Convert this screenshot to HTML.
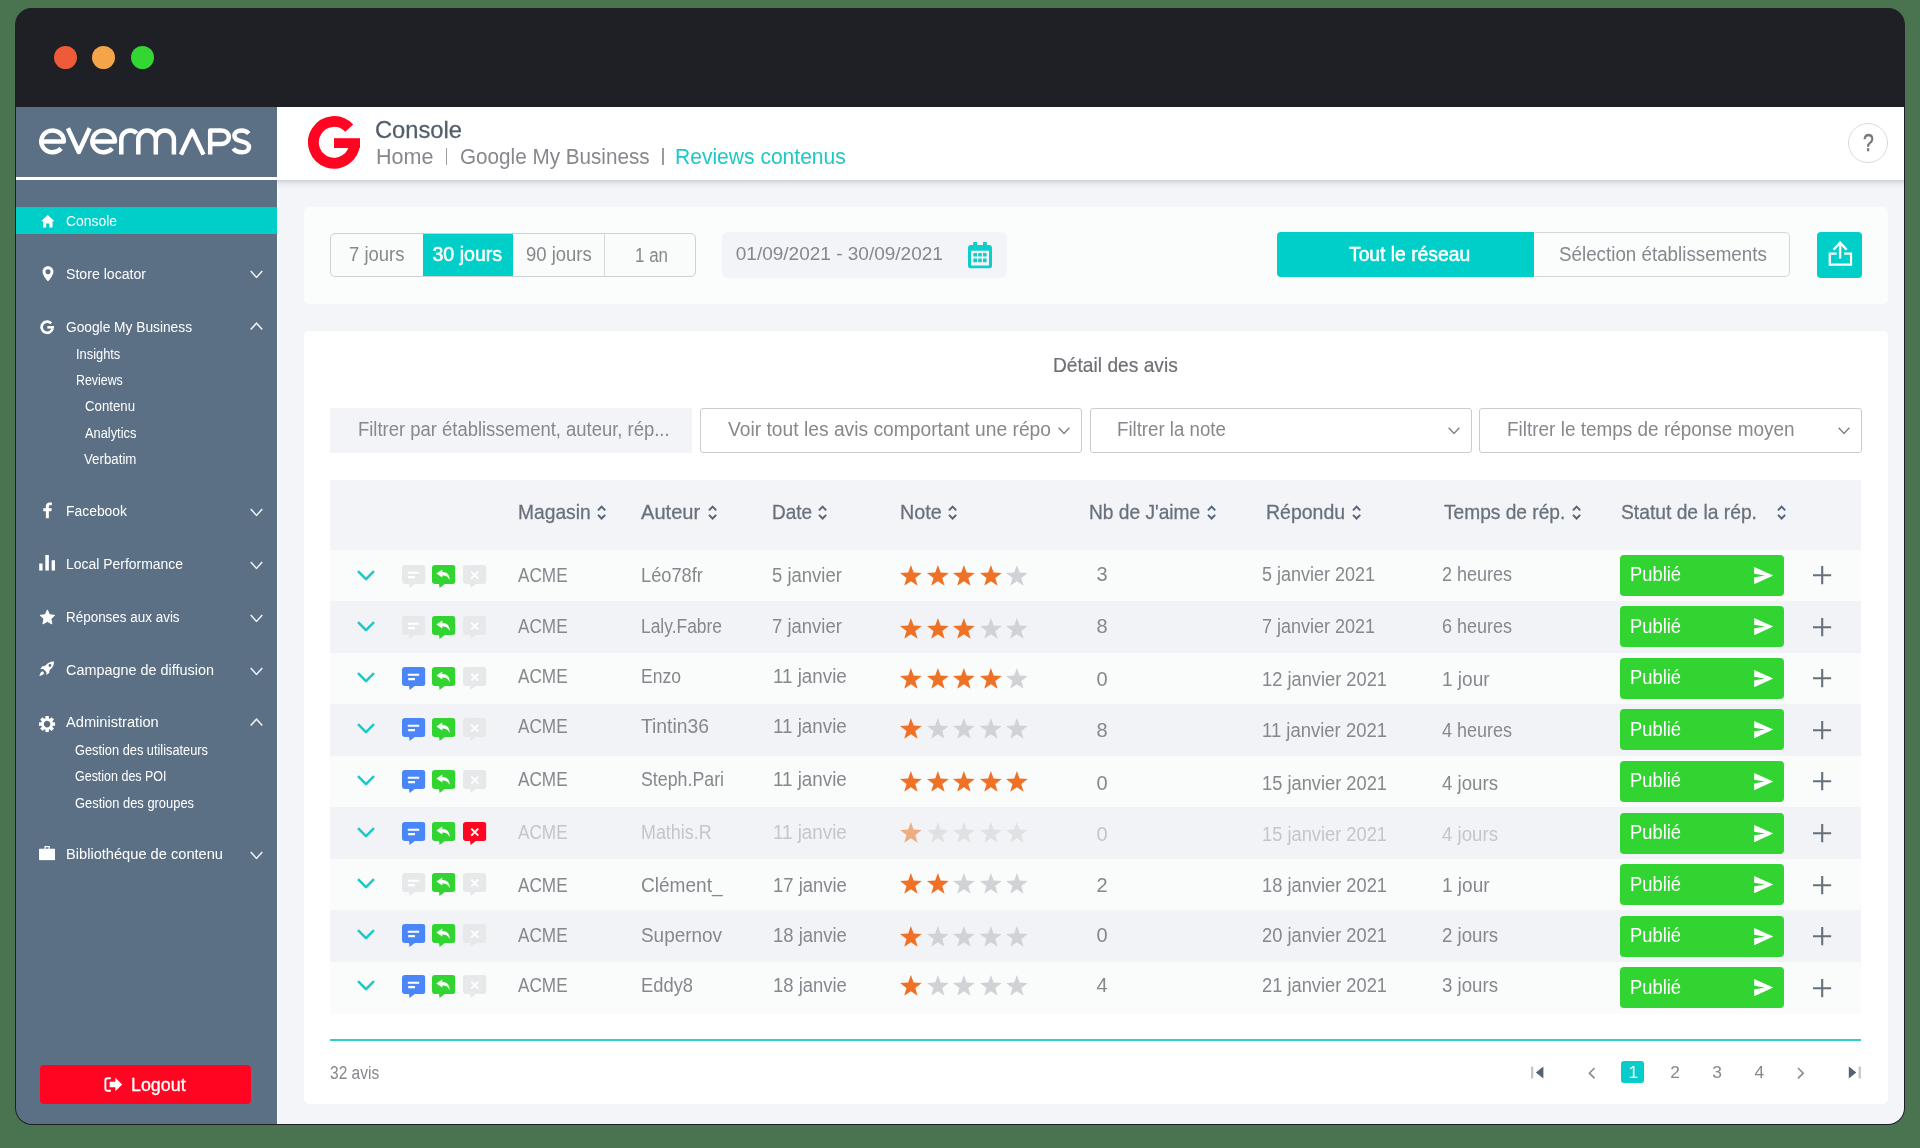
<!DOCTYPE html>
<html lang="fr">
<head>
<meta charset="utf-8">
<title>Evermaps - Console - Reviews contenus</title>
<style>
html,body{margin:0;padding:0}
body{width:1920px;height:1148px;overflow:hidden;background:#4a7350;font-family:"Liberation Sans",sans-serif;position:relative}
#window{position:absolute;left:15px;top:8px;width:1890px;height:1117px;border-radius:17px;overflow:hidden;background:#1f2025}
#clip{position:absolute;left:1px;top:0;width:1888px;height:1116px;border-radius:16px;overflow:hidden}
#page{position:absolute;left:-16px;top:-8px;width:1920px;height:1148px;will-change:transform}
#titlebar{position:absolute;left:15px;top:8px;width:1889px;height:99px;background:#1f2025}
.tl{position:absolute;top:37.8px;width:23px;height:23px;border-radius:50%}
#content{position:absolute;left:277px;top:107px;width:1627px;height:1017px;background:#f3f5f8;box-shadow:inset 1.5px 0 0 rgba(255,255,255,.75)}
#sidebar{position:absolute;left:16px;top:107px;width:261px;height:1017px;background:#5c7085}
#logo{position:absolute;overflow:visible}
#logoline{position:absolute;left:0;top:69.9px;width:261px;height:3.1px;background:#fff}
#nav-active{position:absolute;left:0;top:100.3px;width:261px;height:26.5px;background:#00cfc9}
#logout{position:absolute;left:23.5px;top:957.7px;width:211.5px;height:39.4px;background:#ff0521;border-radius:4px}
.t{position:absolute;white-space:nowrap;line-height:1;transform-origin:0 50%;display:block}
.i{position:absolute;overflow:visible;fill:currentColor;stroke:none}
#header{position:absolute;left:277px;top:107px;width:1627px;height:73px;background:#fff}
.sep{position:absolute;top:41.2px;width:1.3px;height:16.4px;background:#989da3}
#help{position:absolute;left:1570.8px;top:15.5px;width:38.4px;height:38.4px;border:1px solid #d6dddf;border-radius:50%}
#hshadow{position:absolute;left:277px;top:179.5px;width:1627px;height:9px;background:linear-gradient(to bottom,rgba(120,135,140,.32),rgba(160,170,175,.12) 45%,rgba(243,245,248,0))}
#toolbar{position:absolute;left:304px;top:207px;width:1584px;height:96.5px;background:#fbfcfc;border-radius:5px}
.bgroup{position:absolute;box-sizing:border-box;border:1px solid #ccd2d5;border-radius:5px;background:#fafbfb;overflow:hidden}
.bsep{position:absolute;top:0;width:1.2px;height:100%;background:#d6dadc}
.bactive{position:absolute;top:-1px;height:46px;background:#00cfc9}
#datefield{position:absolute;background:#f2f4f8;border-radius:6px}
.bactive2{position:absolute;background:#00cfc9;border-radius:4px 0 0 4px}
.bsel{position:absolute;box-sizing:border-box;border:1px solid #d3d7da;border-left:none;border-radius:0 5px 5px 0;background:#fbfcfc}
.bexport{position:absolute;background:#00cfc9;border-radius:4px}
#card{position:absolute;left:304px;top:331px;width:1584px;height:773px;background:#fff;border-radius:5px}
#search{position:absolute;background:#f2f4f8}
.select{position:absolute;box-sizing:border-box;border:1px solid #c9cdd0;border-radius:3px;background:#fff}
#thead{position:absolute;background:#f2f4f8}
.th{-webkit-text-stroke:.28px currentColor}
.sb{-webkit-text-stroke:.55px currentColor}
.row{position:absolute;left:26px;width:1531px;height:51.6px;color:#85888d}
.row.odd{background:#fafbfb}
.row.even{background:#f2f3f6}
.row.faded .c{color:#c3c6ca}
.clip{position:absolute;top:0;height:51.6px;overflow:hidden}
.pub{position:absolute;background:#32d432;border-radius:4px}
#tline{position:absolute;height:1.8px;background:#2fcdcb}
#pgcur{position:absolute;background:#06cdc9;border-radius:3px}

</style>
</head>
<body>
<svg width="0" height="0" style="position:absolute">
<defs>
<symbol id="evermaps" viewBox="36 124 220 36">
<g fill="none" stroke="#fff" stroke-width="4.5" stroke-linejoin="round">
<path d="M61.1 148.6A11.3 10.9 0 1 1 63.9 141.4L41.4 141.4"/>
<path d="M67.9 128.2L78.8 152L89.7 128.2"/>
<path d="M112.2 148.6A11.3 10.9 0 1 1 115 141.4L92.5 141.4"/>
<path d="M121.3 154.6L121.3 139.6A9 9 0 0 1 130.3 130.5Q134.4 130.5 136.6 133.4"/>
<path d="M138.3 154.6L138.3 139.3A8.75 8.75 0 0 1 155.8 139.3L155.8 154.6M155.8 139.5A9.05 9 0 0 1 173.9 139.5L173.9 154.6"/>
<path d="M180.9 154.6L192.2 130.8L203.5 154.6"/>
<path d="M210.2 154.6L210.2 130.5L221.6 130.5A7.3 6.7 0 0 1 221.6 143.9L210.2 143.9"/>
<path d="M248.7 133.6C247 131.4 244.6 130.5 241.6 130.5C237 130.5 234.4 132.7 234.4 135.8C234.4 139.2 237.4 140.5 241.5 141.4C246.1 142.4 249 143.7 249 147.2C249 150.5 246.1 152.3 241.9 152.3C238 152.3 235 151 233.4 148.6"/>
</g>
</symbol>
<symbol id="bigG" viewBox="0 0 54 54">
<path d="M42.2 13.2A20.6 20.9 0 1 0 47.6 28.4" fill="none" stroke="currentColor" stroke-width="10.8"/>
<rect x="27" y="23.2" width="26" height="9.8" fill="currentColor"/>
</symbol>
<symbol id="gsm" viewBox="0 0 54 54">
<path d="M41.9 12.1A20.9 20.9 0 1 0 47.3 31.6" fill="none" stroke="#fff" stroke-width="10"/>
<rect x="27.5" y="22.4" width="25.3" height="9.4" fill="#fff"/>
</symbol>
<symbol id="home" viewBox="0 0 16 16"><path fill="#fff" d="M8 .6L15.8 8H13.6V15.4H9.9V10.6H6.1V15.4H2.4V8H.2Z"/></symbol>
<symbol id="pin" viewBox="0 0 12 16"><path fill="#fff" fill-rule="evenodd" d="M6 .3C2.8.3.4 2.8.4 5.8C.4 9.6 6 15.8 6 15.8S11.6 9.6 11.6 5.8C11.6 2.8 9.2.3 6 .3ZM6 3.3A2.6 2.6 0 1 1 6 8.5A2.6 2.6 0 1 1 6 3.3Z"/></symbol>
<symbol id="fb" viewBox="0 0 10 16"><path fill="#fff" d="M6.6 16V8.9H9L9.4 6.1H6.6V4.4C6.6 3.6 6.9 3.1 8 3.1H9.5V.6C9.2.55 8.3.5 7.3.5C5.2.5 3.7 1.8 3.7 4.1V6.1H1.2V8.9H3.7V16Z"/></symbol>
<symbol id="bars" viewBox="0 0 16 16"><path fill="#fff" d="M0 8.6H3.4V16H0ZM6.2 0H9.8V16H6.2ZM12.6 5.2H16V16H12.6Z"/></symbol>
<symbol id="star" viewBox="0 0 16 16"><path fill="#fff" stroke="#fff" stroke-width=".9" stroke-linejoin="round" d="M8 .9L10.2 5.7L15.3 6.3L11.5 9.9L12.5 15L8 12.4L3.5 15L4.5 9.9L.7 6.3L5.8 5.7Z"/></symbol>
<symbol id="rocket" viewBox="0 0 16 16"><path fill="#fff" fill-rule="evenodd" d="M15.6.4C11.6.3 8.6 2 6.6 5L3.4 5.4L1.4 8.4L4.4 8.2L7.8 11.6L7.6 14.6L10.6 12.6L11 9.4C14 7.4 15.7 4.4 15.6.4ZM11.4 3.2A1.5 1.5 0 1 1 11.4 6.2A1.5 1.5 0 1 1 11.4 3.2ZM3.6 10.6C2.2 11.2 1 12.6.4 15.6C3.4 15 4.8 13.8 5.4 12.4Z"/></symbol>
<symbol id="gear" viewBox="-8 -8 16 16"><circle r="4.6" fill="none" stroke="#fff" stroke-width="2.7"/><g fill="#fff"><rect x="-1.7" y="-8" width="3.4" height="3.2"/><rect x="-1.7" y="4.8" width="3.4" height="3.2"/><rect x="-8" y="-1.7" width="3.2" height="3.4"/><rect x="4.8" y="-1.7" width="3.2" height="3.4"/><g transform="rotate(45)"><rect x="-1.7" y="-8" width="3.4" height="3.2"/><rect x="-1.7" y="4.8" width="3.4" height="3.2"/><rect x="-8" y="-1.7" width="3.2" height="3.4"/><rect x="4.8" y="-1.7" width="3.2" height="3.4"/></g></g></symbol>
<symbol id="case" viewBox="0 0 16 14"><path fill="#fff" d="M5.4 0H10.6V2.6H15C15.6 2.6 16 3 16 3.6V13C16 13.6 15.6 14 15 14H1C.4 14 0 13.6 0 13V3.6C0 3 .4 2.6 1 2.6H5.4ZM6.6 1.1V2.6H9.4V1.1Z"/></symbol>
<symbol id="ic-logout" viewBox="0 0 19 15"><path fill="none" stroke="#fff" stroke-width="2" d="M7 1.2H3.6Q1.4 1.2 1.4 3.4V11.6Q1.4 13.8 3.6 13.8H7"/><path fill="#fff" d="M11.6 .6L18.6 7.5L11.6 14.4V10.4H5.8V4.6H11.6Z"/></symbol>
<symbol id="chev-dn" viewBox="0 0 18 10.4" preserveAspectRatio="none"><path d="M1 1.2L9 9L17 1.2" fill="none" stroke="currentColor" vector-effect="non-scaling-stroke"/></symbol>
<symbol id="chev-up" viewBox="0 0 18 10.4" preserveAspectRatio="none"><path d="M1 9.2L9 1.4L17 9.2" fill="none" stroke="currentColor" vector-effect="non-scaling-stroke"/></symbol>
<symbol id="sort" viewBox="0 0 9.4 15.4"><path d="M1 5.4L4.7 1.6L8.4 5.4M1 10L4.7 13.8L8.4 10" fill="none" stroke="currentColor" stroke-width="2"/></symbol>
<symbol id="b-msg" viewBox="0 0 23.4 23"><path d="M3 0H20.4Q23.4 0 23.4 3V16Q23.4 19 20.4 19H12.8L7.6 22.9L7 19H3Q0 19 0 16V3Q0 0 3 0Z"/><path d="M5.8 7.8H17.2M6.2 12.1H13" stroke="#fff" stroke-width="2.1" fill="none"/></symbol>
<symbol id="b-reply" viewBox="0 0 23.4 23"><path d="M3 0H20.4Q23.4 0 23.4 3V16Q23.4 19 20.4 19H12.8L7.6 22.9L7 19H3Q0 19 0 16V3Q0 0 3 0Z"/><path fill="#fff" d="M10.3 4.6V6.9C15.2 6.9 17.9 9.8 17.7 15.2C16.5 12 14.3 10.4 10.3 10.5V12.4L4.4 8.5Z"/></symbol>
<symbol id="b-x" viewBox="0 0 23.4 23"><path d="M3 0H20.4Q23.4 0 23.4 3V16Q23.4 19 20.4 19H12.8L7.6 22.9L7 19H3Q0 19 0 16V3Q0 0 3 0Z"/><path d="M8.3 6.7L15.3 13.7M15.3 6.7L8.3 13.7" stroke="#fff" stroke-width="1.9" fill="none"/></symbol>
<symbol id="star5" viewBox="0 0 21.8 20.8"><path d="M10.9 0L13.6 7.6L21.8 7.9L15.3 12.9L17.6 20.8L10.9 16.2L4.2 20.8L6.5 12.9L0 7.9L8.2 7.6Z"/></symbol>
<symbol id="send" viewBox="0 0 19.6 17.6"><path d="M0 0L19.6 8.8L0 17.6L0 10.8L11 8.8L0 6.8Z"/></symbol>
<symbol id="plus" viewBox="0 0 18.4 18.4"><path d="M9.2 0V18.4M0 9.2H18.4" stroke="currentColor" stroke-width="2.1" fill="none"/></symbol>
<symbol id="calendar" viewBox="0 0 24 26.5"><path fill-rule="evenodd" d="M5.2 0H9V3H15V0H18.8V3H21Q24 3 24 6V23.5Q24 26.5 21 26.5H3Q0 26.5 0 23.5V6Q0 3 3 3H5.2ZM3 8.8V23.4H21V8.8Z"/><path d="M5.4 11H9V14.6H5.4ZM10.2 11H13.8V14.6H10.2ZM15 11H18.6V14.6H15ZM5.4 16.6H9V20.2H5.4ZM10.2 16.6H13.8V20.2H10.2ZM15 16.6H18.6V20.2H15Z"/></symbol>
<symbol id="export" viewBox="0 0 24.6 25"><path d="M5.5 8.8L12.1 1.7L18.7 8.8M12.1 2.4V17.6" fill="none" stroke="currentColor" stroke-width="2.4"/><path d="M8.7 12.7H1.8V23.7H23.1V12.7H16.1" fill="none" stroke="currentColor" stroke-width="2.3"/></symbol>
<symbol id="pg-first" viewBox="0 0 13.4 13"><path fill="#c3c7cb" d="M0 .6H2.3V12.4H0Z"/><path d="M12.4 .4V12.6L4.9 6.5Z"/></symbol>
<symbol id="pg-last" viewBox="0 0 13.4 13"><path fill="#c3c7cb" d="M10.6 .6H12.9V12.4H10.6Z"/><path d="M.8 .4V12.6L8.3 6.5Z"/></symbol>
<symbol id="pg-prev" viewBox="0 0 7.6 12.4"><path d="M6.6 1L1.4 6.2L6.6 11.4" fill="none" stroke="currentColor" stroke-width="1.7"/></symbol>
<symbol id="pg-next" viewBox="0 0 7.6 12.4"><path d="M1 1L6.2 6.2L1 11.4" fill="none" stroke="currentColor" stroke-width="1.7"/></symbol>
</defs>
</svg>

<div id="window"><div id="clip"><div id="page">
<div id="titlebar"><i class="tl" style="left:39.1px;background:#ef5a39"></i><i class="tl" style="left:76.6px;background:#f4a54a"></i><i class="tl" style="left:116.4px;background:#33d633"></i></div>
<div id="content"></div>
<div id="sidebar">
<svg id="logo" style="left:20px;top:17px;width:220px;height:36px"><use href="#evermaps"/></svg>
<div id="logoline"></div>
<div id="nav-active"></div>
<svg class="i" style="left:24.6px;top:106.9px;width:13.6px;height:14.4px;"><use href="#home"/></svg>
<span class="t" style="left:50.0px;top:106.2px;font-size:15px;transform:scaleX(0.9267);color:#fff;">Console</span>
<svg class="i" style="left:25.6px;top:159.0px;width:12.0px;height:15.6px;"><use href="#pin"/></svg>
<span class="t" style="left:50.2px;top:159.1px;font-size:15.5px;transform:scaleX(0.9103);color:#fff;">Store locator</span>
<svg class="i" style="left:234.2px;top:163.4px;width:13.0px;height:8.6px;color:#eef1f4;stroke-width:1.55;"><use href="#chev-dn"/></svg>
<svg class="i" style="left:24.2px;top:212.5px;width:14.4px;height:14.6px;"><use href="#gsm"/></svg>
<span class="t" style="left:50.2px;top:212.1px;font-size:15.5px;transform:scaleX(0.8864);color:#fff;">Google My Business</span>
<svg class="i" style="left:234.2px;top:214.8px;width:13.0px;height:8.6px;color:#eef1f4;stroke-width:1.55;"><use href="#chev-up"/></svg>
<svg class="i" style="left:25.9px;top:395.0px;width:10.4px;height:16.6px;"><use href="#fb"/></svg>
<span class="t" style="left:50.2px;top:395.8px;font-size:15.5px;transform:scaleX(0.8961);color:#fff;">Facebook</span>
<svg class="i" style="left:234.2px;top:400.8px;width:13.0px;height:8.6px;color:#eef1f4;stroke-width:1.55;"><use href="#chev-dn"/></svg>
<svg class="i" style="left:23.3px;top:447.8px;width:16.2px;height:15.8px;"><use href="#bars"/></svg>
<span class="t" style="left:50.2px;top:448.8px;font-size:15.5px;transform:scaleX(0.8993);color:#fff;">Local Performance</span>
<svg class="i" style="left:234.2px;top:453.8px;width:13.0px;height:8.6px;color:#eef1f4;stroke-width:1.55;"><use href="#chev-dn"/></svg>
<svg class="i" style="left:23.0px;top:502.0px;width:16.8px;height:16.0px;"><use href="#star"/></svg>
<span class="t" style="left:50.2px;top:502.0px;font-size:15.5px;transform:scaleX(0.8674);color:#fff;">Réponses aux avis</span>
<svg class="i" style="left:234.2px;top:507.0px;width:13.0px;height:8.6px;color:#eef1f4;stroke-width:1.55;"><use href="#chev-dn"/></svg>
<svg class="i" style="left:23.3px;top:554.0px;width:15.4px;height:15.4px;"><use href="#rocket"/></svg>
<span class="t" style="left:50.2px;top:554.7px;font-size:15.5px;transform:scaleX(0.9300);color:#fff;">Campagne de diffusion</span>
<svg class="i" style="left:234.2px;top:559.7px;width:13.0px;height:8.6px;color:#eef1f4;stroke-width:1.55;"><use href="#chev-dn"/></svg>
<svg class="i" style="left:23.2px;top:608.8px;width:16.2px;height:16.2px;"><use href="#gear"/></svg>
<span class="t" style="left:50.2px;top:607.2px;font-size:15.5px;transform:scaleX(0.9439);color:#fff;">Administration</span>
<svg class="i" style="left:234.2px;top:610.6px;width:13.0px;height:8.6px;color:#eef1f4;stroke-width:1.55;"><use href="#chev-up"/></svg>
<svg class="i" style="left:23.3px;top:739.3px;width:16.2px;height:14.4px;"><use href="#case"/></svg>
<span class="t" style="left:50.2px;top:739.2px;font-size:15.5px;transform:scaleX(0.9439);color:#fff;">Bibliothéque de contenu</span>
<svg class="i" style="left:234.2px;top:744.2px;width:13.0px;height:8.6px;color:#eef1f4;stroke-width:1.55;"><use href="#chev-dn"/></svg>
<span class="t" style="left:59.6px;top:239.7px;font-size:14px;transform:scaleX(0.9182);color:#fff;">Insights</span>
<span class="t" style="left:59.6px;top:265.9px;font-size:14px;transform:scaleX(0.8846);color:#fff;">Reviews</span>
<span class="t" style="left:69.2px;top:292.4px;font-size:14px;transform:scaleX(0.9446);color:#fff;">Contenu</span>
<span class="t" style="left:69.2px;top:318.7px;font-size:14px;transform:scaleX(0.9157);color:#fff;">Analytics</span>
<span class="t" style="left:68.0px;top:345.1px;font-size:14px;transform:scaleX(0.9484);color:#fff;">Verbatim</span>
<span class="t" style="left:59.4px;top:635.5px;font-size:14px;transform:scaleX(0.9140);color:#fff;">Gestion des utilisateurs</span>
<span class="t" style="left:59.4px;top:662.1px;font-size:14px;transform:scaleX(0.8908);color:#fff;">Gestion des POI</span>
<span class="t" style="left:59.4px;top:688.5px;font-size:14px;transform:scaleX(0.9211);color:#fff;">Gestion des groupes</span>
<div id="logout"><svg class="i" style="left:64.5px;top:12.0px;width:18.6px;height:15.0px;color:#fff;"><use href="#ic-logout"/></svg><span class="t" style="left:91.6px;top:11.0px;font-size:18px;transform:scaleX(0.9917);color:#fff;-webkit-text-stroke:.3px #fff;">Logout</span></div>
</div>
<div id="header">
<svg class="i" viewBox="0 0 54 54" style="left:29.6px;top:8.4px;width:54px;height:54px;color:#ff0521"><use href="#bigG"/></svg>
<span class="t th" style="left:98.4px;top:10.5px;font-size:24px;transform:scaleX(0.9880);color:#525e6c;">Console</span>
<span class="t" style="left:98.6px;top:39.4px;font-size:22px;transform:scaleX(0.9781);color:#85888d;">Home</span>
<span class="t" style="left:182.6px;top:39.4px;font-size:22px;transform:scaleX(0.9397);color:#85888d;">Google My Business</span>
<span class="t" style="left:398.0px;top:39.4px;font-size:22px;transform:scaleX(0.9567);color:#1ec8c6;">Reviews contenus</span>
<i class="sep" style="left:169.2px"></i><i class="sep" style="left:385.4px"></i>
<div id="help"><span class="t sb" style="left:13.9px;top:7.4px;font-size:24px;transform:scaleX(0.8091);color:#74777c;">?</span></div>
</div>
<div id="hshadow"></div>
<div id="toolbar">
<div class="bgroup" style="left:26px;top:25.5px;width:365.6px;height:44.6px">
<i class="bsep" style="left:273px"></i>
<div class="bactive" style="left:91.5px;width:90.6px"></div>
</div>
<span class="t" style="left:44.6px;top:37.6px;font-size:19.6px;transform:scaleX(0.9417);color:#85888d;">7 jours</span>
<span class="t sb" style="left:128.4px;top:37.6px;font-size:19.6px;color:#fff;">30 jours</span>
<span class="t" style="left:221.8px;top:37.6px;font-size:19.6px;transform:scaleX(0.9436);color:#85888d;">90 jours</span>
<span class="t" style="left:330.6px;top:38.6px;font-size:19.6px;transform:scaleX(0.8651);color:#85888d;">1 an</span>
<div id="datefield" style="left:418.3px;top:25.3px;width:284.4px;height:45.6px"></div>
<span class="t" style="left:431.8px;top:37.3px;font-size:19px;color:#85888d;">01/09/2021 - 30/09/2021</span>
<svg class="i" style="left:664.0px;top:35.0px;width:24.0px;height:26.5px;color:#0fcdc9;"><use href="#calendar"/></svg>
<div class="bactive2" style="left:972.8px;top:25.3px;width:257.7px;height:45.2px"></div>
<div class="bsel" style="left:1230.5px;top:25.3px;width:255.8px;height:45.2px"></div>
<span class="t sb" style="left:1044.6px;top:36.8px;font-size:20.4px;transform:scaleX(0.9458);color:#fff;">Tout le réseau</span>
<span class="t" style="left:1254.6px;top:36.6px;font-size:20px;transform:scaleX(0.9393);color:#85888d;">Sélection établissements</span>
<div class="bexport" style="left:1513px;top:25.1px;width:45.2px;height:45.6px"><svg class="i" style="left:10.6px;top:9.4px;width:24.6px;height:25.0px;color:#fff;"><use href="#export"/></svg></div>
</div>
<div id="card">
<span class="t" style="left:748.8px;top:23.7px;font-size:20.6px;transform:scaleX(0.9316);color:#6c7075;-webkit-text-stroke:.2px currentColor;">Détail des avis</span>
<div id="search" style="left:26.2px;top:77.4px;width:361.6px;height:44.4px"></div>
<span class="t" style="left:53.8px;top:88.2px;font-size:20px;transform:scaleX(0.9221);color:#85888d;">Filtrer par établissement, auteur, rép...</span>
<div class="select" style="left:396.3px;top:77.4px;width:382.2px;height:44.4px"></div>
<span class="t" style="left:423.5px;top:88.2px;font-size:20px;transform:scaleX(0.9620);color:#85888d;">Voir tout les avis comportant une répo</span>
<svg class="i" style="left:754.4px;top:96.4px;width:12.0px;height:7.4px;color:#7b8189;stroke-width:1.45;"><use href="#chev-dn"/></svg>
<div class="select" style="left:785.6px;top:77.4px;width:382.4px;height:44.4px"></div>
<span class="t" style="left:813.2px;top:88.2px;font-size:20px;transform:scaleX(0.9322);color:#85888d;">Filtrer la note</span>
<svg class="i" style="left:1143.8px;top:96.4px;width:12.0px;height:7.4px;color:#7b8189;stroke-width:1.45;"><use href="#chev-dn"/></svg>
<div class="select" style="left:1175.2px;top:77.4px;width:382.4px;height:44.4px"></div>
<span class="t" style="left:1202.9px;top:88.2px;font-size:20px;transform:scaleX(0.9474);color:#85888d;">Filtrer le temps de réponse moyen</span>
<svg class="i" style="left:1533.6px;top:96.4px;width:12.0px;height:7.4px;color:#7b8189;stroke-width:1.45;"><use href="#chev-dn"/></svg>
<div id="thead" style="left:26px;top:149px;width:1531px;height:70px"></div>
<span class="t th" style="left:214.3px;top:171.4px;font-size:20.4px;transform:scaleX(0.9428);color:#68717c;">Magasin</span>
<svg class="i" style="left:292.8px;top:174.0px;width:9.2px;height:15.2px;color:#55647a;"><use href="#sort"/></svg>
<span class="t th" style="left:337.2px;top:171.4px;font-size:20.4px;transform:scaleX(0.9849);color:#68717c;">Auteur</span>
<svg class="i" style="left:403.6px;top:174.0px;width:9.2px;height:15.2px;color:#55647a;"><use href="#sort"/></svg>
<span class="t th" style="left:467.9px;top:171.4px;font-size:20.4px;transform:scaleX(0.9306);color:#68717c;">Date</span>
<svg class="i" style="left:514.4px;top:174.0px;width:9.2px;height:15.2px;color:#55647a;"><use href="#sort"/></svg>
<span class="t th" style="left:596.0px;top:171.4px;font-size:20.4px;transform:scaleX(0.9677);color:#68717c;">Note</span>
<svg class="i" style="left:644.2px;top:174.0px;width:9.2px;height:15.2px;color:#55647a;"><use href="#sort"/></svg>
<span class="t th" style="left:784.7px;top:171.4px;font-size:20.4px;transform:scaleX(0.9399);color:#68717c;">Nb de J'aime</span>
<svg class="i" style="left:902.8px;top:174.0px;width:9.2px;height:15.2px;color:#55647a;"><use href="#sort"/></svg>
<span class="t th" style="left:961.8px;top:171.4px;font-size:20.4px;transform:scaleX(0.9564);color:#68717c;">Répondu</span>
<svg class="i" style="left:1048.0px;top:174.0px;width:9.2px;height:15.2px;color:#55647a;"><use href="#sort"/></svg>
<span class="t th" style="left:1139.5px;top:171.4px;font-size:20.4px;transform:scaleX(0.9384);color:#68717c;">Temps de rép.</span>
<svg class="i" style="left:1268.4px;top:174.0px;width:9.2px;height:15.2px;color:#55647a;"><use href="#sort"/></svg>
<span class="t th" style="left:1317.0px;top:171.4px;font-size:20.4px;transform:scaleX(0.9443);color:#68717c;">Statut de la rép.</span>
<svg class="i" style="left:1473.2px;top:174.0px;width:9.2px;height:15.2px;color:#55647a;"><use href="#sort"/></svg>
<div class="row odd" style="top:218.60px">
<svg class="i" style="left:26.6px;top:20.1px;width:18.0px;height:10.6px;color:#1fc8c8;stroke-width:2.5;"><use href="#chev-dn"/></svg><svg class="i" style="left:71.6px;top:15.2px;width:23.4px;height:23.0px;color:#e6e8ea;"><use href="#b-msg"/></svg><svg class="i" style="left:102.2px;top:15.2px;width:23.4px;height:23.0px;color:#32d432;"><use href="#b-reply"/></svg><svg class="i" style="left:132.6px;top:15.2px;width:23.4px;height:23.0px;color:#e6e8ea;"><use href="#b-x"/></svg><span class="t c" style="left:188.3px;top:15.0px;font-size:20px;transform:scaleX(0.8583);">ACME</span><div class="clip" style="left:311.2px;width:83px"><span class="t c" style="left:0.0px;top:15.0px;font-size:20px;transform:scaleX(0.9125);">Léo78fr</span></div><div class="clip" style="left:441.9px;width:75.4px"><span class="t c" style="left:0.0px;top:15.0px;font-size:20px;transform:scaleX(0.9233);">5 janvier</span></div><svg class="i" style="left:570.2px;top:15.1px;width:21.8px;height:20.8px;color:#ee7125;"><use href="#star5"/></svg><svg class="i" style="left:596.7px;top:15.1px;width:21.8px;height:20.8px;color:#ee7125;"><use href="#star5"/></svg><svg class="i" style="left:623.2px;top:15.1px;width:21.8px;height:20.8px;color:#ee7125;"><use href="#star5"/></svg><svg class="i" style="left:649.7px;top:15.1px;width:21.8px;height:20.8px;color:#ee7125;"><use href="#star5"/></svg><svg class="i" style="left:676.2px;top:15.1px;width:21.8px;height:20.8px;color:#d0d3d5;"><use href="#star5"/></svg><span class="t c" style="left:766.6px;top:14.9px;font-size:20px;">3</span><span class="t c" style="left:931.7px;top:14.9px;font-size:20px;transform:scaleX(0.8993);">5 janvier 2021</span><span class="t c" style="left:1111.9px;top:14.9px;font-size:20px;transform:scaleX(0.8993);">2 heures</span><div class="pub" style="left:1290.4px;top:5.00px;width:163.8px;height:41px"><span class="t" style="left:10.0px;top:9.6px;font-size:20px;transform:scaleX(0.9173);color:#fff;">Publié</span><svg class="i" style="left:133.6px;top:12.0px;width:19.4px;height:17.2px;color:#fff;"><use href="#send"/></svg></div><svg class="i" style="left:1483.4px;top:16.6px;width:18.4px;height:18.4px;color:#66707d;"><use href="#plus"/></svg>
</div>
<div class="row even" style="top:270.15px">
<svg class="i" style="left:26.6px;top:20.1px;width:18.0px;height:10.6px;color:#1fc8c8;stroke-width:2.5;"><use href="#chev-dn"/></svg><svg class="i" style="left:71.6px;top:15.2px;width:23.4px;height:23.0px;color:#e6e8ea;"><use href="#b-msg"/></svg><svg class="i" style="left:102.2px;top:15.2px;width:23.4px;height:23.0px;color:#32d432;"><use href="#b-reply"/></svg><svg class="i" style="left:132.6px;top:15.2px;width:23.4px;height:23.0px;color:#e6e8ea;"><use href="#b-x"/></svg><span class="t c" style="left:188.3px;top:14.6px;font-size:20px;transform:scaleX(0.8583);">ACME</span><div class="clip" style="left:311.2px;width:83px"><span class="t c" style="left:0.0px;top:14.6px;font-size:20px;transform:scaleX(0.8709);">Laly.Fabre</span></div><div class="clip" style="left:441.9px;width:75.4px"><span class="t c" style="left:0.0px;top:14.6px;font-size:20px;transform:scaleX(0.9233);">7 janvier</span></div><svg class="i" style="left:570.2px;top:16.4px;width:21.8px;height:20.8px;color:#ee7125;"><use href="#star5"/></svg><svg class="i" style="left:596.7px;top:16.4px;width:21.8px;height:20.8px;color:#ee7125;"><use href="#star5"/></svg><svg class="i" style="left:623.2px;top:16.4px;width:21.8px;height:20.8px;color:#ee7125;"><use href="#star5"/></svg><svg class="i" style="left:649.7px;top:16.4px;width:21.8px;height:20.8px;color:#d0d3d5;"><use href="#star5"/></svg><svg class="i" style="left:676.2px;top:16.4px;width:21.8px;height:20.8px;color:#d0d3d5;"><use href="#star5"/></svg><span class="t c" style="left:766.6px;top:14.4px;font-size:20px;">8</span><span class="t c" style="left:931.7px;top:14.4px;font-size:20px;transform:scaleX(0.8993);">7 janvier 2021</span><span class="t c" style="left:1111.9px;top:14.4px;font-size:20px;transform:scaleX(0.8993);">6 heures</span><div class="pub" style="left:1290.4px;top:5.10px;width:163.8px;height:41px"><span class="t" style="left:10.0px;top:9.6px;font-size:20px;transform:scaleX(0.9173);color:#fff;">Publié</span><svg class="i" style="left:133.6px;top:12.0px;width:19.4px;height:17.2px;color:#fff;"><use href="#send"/></svg></div><svg class="i" style="left:1483.4px;top:16.7px;width:18.4px;height:18.4px;color:#66707d;"><use href="#plus"/></svg>
</div>
<div class="row odd" style="top:321.70px">
<svg class="i" style="left:26.6px;top:19.5px;width:18.0px;height:10.6px;color:#1fc8c8;stroke-width:2.5;"><use href="#chev-dn"/></svg><svg class="i" style="left:71.6px;top:14.6px;width:23.4px;height:23.0px;color:#4a86f8;"><use href="#b-msg"/></svg><svg class="i" style="left:102.2px;top:14.6px;width:23.4px;height:23.0px;color:#32d432;"><use href="#b-reply"/></svg><svg class="i" style="left:132.6px;top:14.6px;width:23.4px;height:23.0px;color:#e6e8ea;"><use href="#b-x"/></svg><span class="t c" style="left:188.3px;top:13.5px;font-size:20px;transform:scaleX(0.8583);">ACME</span><div class="clip" style="left:311.2px;width:83px"><span class="t c" style="left:0.0px;top:13.5px;font-size:20px;transform:scaleX(0.8774);">Enzo</span></div><div class="clip" style="left:441.9px;width:75.4px"><span class="t c" style="left:1.4px;top:13.5px;font-size:20px;transform:scaleX(0.9386);">11 janvier</span></div><svg class="i" style="left:570.2px;top:15.6px;width:21.8px;height:20.8px;color:#ee7125;"><use href="#star5"/></svg><svg class="i" style="left:596.7px;top:15.6px;width:21.8px;height:20.8px;color:#ee7125;"><use href="#star5"/></svg><svg class="i" style="left:623.2px;top:15.6px;width:21.8px;height:20.8px;color:#ee7125;"><use href="#star5"/></svg><svg class="i" style="left:649.7px;top:15.6px;width:21.8px;height:20.8px;color:#ee7125;"><use href="#star5"/></svg><svg class="i" style="left:676.2px;top:15.6px;width:21.8px;height:20.8px;color:#d0d3d5;"><use href="#star5"/></svg><span class="t c" style="left:766.6px;top:15.9px;font-size:20px;">0</span><span class="t c" style="left:931.7px;top:15.9px;font-size:20px;transform:scaleX(0.9139);">12 janvier 2021</span><span class="t c" style="left:1111.9px;top:15.9px;font-size:20px;transform:scaleX(0.9514);">1 jour</span><div class="pub" style="left:1290.4px;top:5.20px;width:163.8px;height:41px"><span class="t" style="left:10.0px;top:9.6px;font-size:20px;transform:scaleX(0.9173);color:#fff;">Publié</span><svg class="i" style="left:133.6px;top:12.0px;width:19.4px;height:17.2px;color:#fff;"><use href="#send"/></svg></div><svg class="i" style="left:1483.4px;top:16.8px;width:18.4px;height:18.4px;color:#66707d;"><use href="#plus"/></svg>
</div>
<div class="row even" style="top:373.25px">
<svg class="i" style="left:26.6px;top:18.4px;width:18.0px;height:10.6px;color:#1fc8c8;stroke-width:2.5;"><use href="#chev-dn"/></svg><svg class="i" style="left:71.6px;top:13.5px;width:23.4px;height:23.0px;color:#4a86f8;"><use href="#b-msg"/></svg><svg class="i" style="left:102.2px;top:13.5px;width:23.4px;height:23.0px;color:#32d432;"><use href="#b-reply"/></svg><svg class="i" style="left:132.6px;top:13.5px;width:23.4px;height:23.0px;color:#e6e8ea;"><use href="#b-x"/></svg><span class="t c" style="left:188.3px;top:12.0px;font-size:20px;transform:scaleX(0.8583);">ACME</span><div class="clip" style="left:311.2px;width:83px"><span class="t c" style="left:0.0px;top:12.0px;font-size:20px;transform:scaleX(0.9657);">Tintin36</span></div><div class="clip" style="left:441.9px;width:75.4px"><span class="t c" style="left:1.4px;top:12.0px;font-size:20px;transform:scaleX(0.9386);">11 janvier</span></div><svg class="i" style="left:570.2px;top:14.1px;width:21.8px;height:20.8px;color:#ee7125;"><use href="#star5"/></svg><svg class="i" style="left:596.7px;top:14.1px;width:21.8px;height:20.8px;color:#d0d3d5;"><use href="#star5"/></svg><svg class="i" style="left:623.2px;top:14.1px;width:21.8px;height:20.8px;color:#d0d3d5;"><use href="#star5"/></svg><svg class="i" style="left:649.7px;top:14.1px;width:21.8px;height:20.8px;color:#d0d3d5;"><use href="#star5"/></svg><svg class="i" style="left:676.2px;top:14.1px;width:21.8px;height:20.8px;color:#d0d3d5;"><use href="#star5"/></svg><span class="t c" style="left:766.6px;top:16.2px;font-size:20px;">8</span><span class="t c" style="left:931.7px;top:16.2px;font-size:20px;transform:scaleX(0.9240);">11 janvier 2021</span><span class="t c" style="left:1111.9px;top:16.2px;font-size:20px;transform:scaleX(0.8993);">4 heures</span><div class="pub" style="left:1290.4px;top:4.95px;width:163.8px;height:41px"><span class="t" style="left:10.0px;top:9.6px;font-size:20px;transform:scaleX(0.9173);color:#fff;">Publié</span><svg class="i" style="left:133.6px;top:12.0px;width:19.4px;height:17.2px;color:#fff;"><use href="#send"/></svg></div><svg class="i" style="left:1483.4px;top:16.6px;width:18.4px;height:18.4px;color:#66707d;"><use href="#plus"/></svg>
</div>
<div class="row odd" style="top:424.80px">
<svg class="i" style="left:26.6px;top:19.3px;width:18.0px;height:10.6px;color:#1fc8c8;stroke-width:2.5;"><use href="#chev-dn"/></svg><svg class="i" style="left:71.6px;top:14.4px;width:23.4px;height:23.0px;color:#4a86f8;"><use href="#b-msg"/></svg><svg class="i" style="left:102.2px;top:14.4px;width:23.4px;height:23.0px;color:#32d432;"><use href="#b-reply"/></svg><svg class="i" style="left:132.6px;top:14.4px;width:23.4px;height:23.0px;color:#e6e8ea;"><use href="#b-x"/></svg><span class="t c" style="left:188.3px;top:13.0px;font-size:20px;transform:scaleX(0.8583);">ACME</span><div class="clip" style="left:311.2px;width:83px"><span class="t c" style="left:0.0px;top:13.0px;font-size:20px;transform:scaleX(0.8887);">Steph.Pari</span></div><div class="clip" style="left:441.9px;width:75.4px"><span class="t c" style="left:1.4px;top:13.0px;font-size:20px;transform:scaleX(0.9386);">11 janvier</span></div><svg class="i" style="left:570.2px;top:15.5px;width:21.8px;height:20.8px;color:#ee7125;"><use href="#star5"/></svg><svg class="i" style="left:596.7px;top:15.5px;width:21.8px;height:20.8px;color:#ee7125;"><use href="#star5"/></svg><svg class="i" style="left:623.2px;top:15.5px;width:21.8px;height:20.8px;color:#ee7125;"><use href="#star5"/></svg><svg class="i" style="left:649.7px;top:15.5px;width:21.8px;height:20.8px;color:#ee7125;"><use href="#star5"/></svg><svg class="i" style="left:676.2px;top:15.5px;width:21.8px;height:20.8px;color:#ee7125;"><use href="#star5"/></svg><span class="t c" style="left:766.6px;top:17.6px;font-size:20px;">0</span><span class="t c" style="left:931.7px;top:17.6px;font-size:20px;transform:scaleX(0.9139);">15 janvier 2021</span><span class="t c" style="left:1111.9px;top:17.6px;font-size:20px;transform:scaleX(0.9328);">4 jours</span><div class="pub" style="left:1290.4px;top:5.00px;width:163.8px;height:41px"><span class="t" style="left:10.0px;top:9.6px;font-size:20px;transform:scaleX(0.9173);color:#fff;">Publié</span><svg class="i" style="left:133.6px;top:12.0px;width:19.4px;height:17.2px;color:#fff;"><use href="#send"/></svg></div><svg class="i" style="left:1483.4px;top:16.6px;width:18.4px;height:18.4px;color:#66707d;"><use href="#plus"/></svg>
</div>
<div class="row even faded" style="top:476.35px">
<svg class="i" style="left:26.6px;top:19.4px;width:18.0px;height:10.6px;color:#1fc8c8;stroke-width:2.5;"><use href="#chev-dn"/></svg><svg class="i" style="left:71.6px;top:14.5px;width:23.4px;height:23.0px;color:#4a86f8;"><use href="#b-msg"/></svg><svg class="i" style="left:102.2px;top:14.5px;width:23.4px;height:23.0px;color:#32d432;"><use href="#b-reply"/></svg><svg class="i" style="left:132.6px;top:14.5px;width:23.4px;height:23.0px;color:#ff0521;"><use href="#b-x"/></svg><span class="t c" style="left:188.3px;top:14.4px;font-size:20px;transform:scaleX(0.8583);">ACME</span><div class="clip" style="left:311.2px;width:83px"><span class="t c" style="left:0.0px;top:14.4px;font-size:20px;transform:scaleX(0.8947);">Mathis.R</span></div><div class="clip" style="left:441.9px;width:75.4px"><span class="t c" style="left:1.4px;top:14.4px;font-size:20px;transform:scaleX(0.9386);">11 janvier</span></div><svg class="i" style="left:570.2px;top:14.7px;width:21.8px;height:20.8px;color:#ee7125;opacity:.55;"><use href="#star5"/></svg><svg class="i" style="left:596.7px;top:14.7px;width:21.8px;height:20.8px;color:#d0d3d5;opacity:.55;"><use href="#star5"/></svg><svg class="i" style="left:623.2px;top:14.7px;width:21.8px;height:20.8px;color:#d0d3d5;opacity:.55;"><use href="#star5"/></svg><svg class="i" style="left:649.7px;top:14.7px;width:21.8px;height:20.8px;color:#d0d3d5;opacity:.55;"><use href="#star5"/></svg><svg class="i" style="left:676.2px;top:14.7px;width:21.8px;height:20.8px;color:#d0d3d5;opacity:.55;"><use href="#star5"/></svg><span class="t c" style="left:766.6px;top:16.9px;font-size:20px;">0</span><span class="t c" style="left:931.7px;top:16.9px;font-size:20px;transform:scaleX(0.9139);">15 janvier 2021</span><span class="t c" style="left:1111.9px;top:16.9px;font-size:20px;transform:scaleX(0.9328);">4 jours</span><div class="pub" style="left:1290.4px;top:5.35px;width:163.8px;height:41px"><span class="t" style="left:10.0px;top:9.6px;font-size:20px;transform:scaleX(0.9173);color:#fff;">Publié</span><svg class="i" style="left:133.6px;top:12.0px;width:19.4px;height:17.2px;color:#fff;"><use href="#send"/></svg></div><svg class="i" style="left:1483.4px;top:17.0px;width:18.4px;height:18.4px;color:#66707d;"><use href="#plus"/></svg>
</div>
<div class="row odd" style="top:527.90px">
<svg class="i" style="left:26.6px;top:19.1px;width:18.0px;height:10.6px;color:#1fc8c8;stroke-width:2.5;"><use href="#chev-dn"/></svg><svg class="i" style="left:71.6px;top:14.2px;width:23.4px;height:23.0px;color:#e6e8ea;"><use href="#b-msg"/></svg><svg class="i" style="left:102.2px;top:14.2px;width:23.4px;height:23.0px;color:#32d432;"><use href="#b-reply"/></svg><svg class="i" style="left:132.6px;top:14.2px;width:23.4px;height:23.0px;color:#e6e8ea;"><use href="#b-x"/></svg><span class="t c" style="left:188.3px;top:15.7px;font-size:20px;transform:scaleX(0.8583);">ACME</span><div class="clip" style="left:311.2px;width:83px"><span class="t c" style="left:0.0px;top:15.7px;font-size:20px;transform:scaleX(0.9533);">Clément_</span></div><div class="clip" style="left:441.9px;width:75.4px"><span class="t c" style="left:1.4px;top:15.7px;font-size:20px;transform:scaleX(0.9225);">17 janvier</span></div><svg class="i" style="left:570.2px;top:14.5px;width:21.8px;height:20.8px;color:#ee7125;"><use href="#star5"/></svg><svg class="i" style="left:596.7px;top:14.5px;width:21.8px;height:20.8px;color:#ee7125;"><use href="#star5"/></svg><svg class="i" style="left:623.2px;top:14.5px;width:21.8px;height:20.8px;color:#d0d3d5;"><use href="#star5"/></svg><svg class="i" style="left:649.7px;top:14.5px;width:21.8px;height:20.8px;color:#d0d3d5;"><use href="#star5"/></svg><svg class="i" style="left:676.2px;top:14.5px;width:21.8px;height:20.8px;color:#d0d3d5;"><use href="#star5"/></svg><span class="t c" style="left:766.6px;top:15.8px;font-size:20px;">2</span><span class="t c" style="left:931.7px;top:15.8px;font-size:20px;transform:scaleX(0.9139);">18 janvier 2021</span><span class="t c" style="left:1111.9px;top:15.8px;font-size:20px;transform:scaleX(0.9514);">1 jour</span><div class="pub" style="left:1290.4px;top:5.10px;width:163.8px;height:41px"><span class="t" style="left:10.0px;top:9.6px;font-size:20px;transform:scaleX(0.9173);color:#fff;">Publié</span><svg class="i" style="left:133.6px;top:12.0px;width:19.4px;height:17.2px;color:#fff;"><use href="#send"/></svg></div><svg class="i" style="left:1483.4px;top:16.7px;width:18.4px;height:18.4px;color:#66707d;"><use href="#plus"/></svg>
</div>
<div class="row even" style="top:579.45px">
<svg class="i" style="left:26.6px;top:18.4px;width:18.0px;height:10.6px;color:#1fc8c8;stroke-width:2.5;"><use href="#chev-dn"/></svg><svg class="i" style="left:71.6px;top:13.5px;width:23.4px;height:23.0px;color:#4a86f8;"><use href="#b-msg"/></svg><svg class="i" style="left:102.2px;top:13.5px;width:23.4px;height:23.0px;color:#32d432;"><use href="#b-reply"/></svg><svg class="i" style="left:132.6px;top:13.5px;width:23.4px;height:23.0px;color:#e6e8ea;"><use href="#b-x"/></svg><span class="t c" style="left:188.3px;top:14.1px;font-size:20px;transform:scaleX(0.8583);">ACME</span><div class="clip" style="left:311.2px;width:83px"><span class="t c" style="left:0.0px;top:14.1px;font-size:20px;transform:scaleX(0.9461);">Supernov</span></div><div class="clip" style="left:441.9px;width:75.4px"><span class="t c" style="left:1.4px;top:14.1px;font-size:20px;transform:scaleX(0.9225);">18 janvier</span></div><svg class="i" style="left:570.2px;top:15.8px;width:21.8px;height:20.8px;color:#ee7125;"><use href="#star5"/></svg><svg class="i" style="left:596.7px;top:15.8px;width:21.8px;height:20.8px;color:#d0d3d5;"><use href="#star5"/></svg><svg class="i" style="left:623.2px;top:15.8px;width:21.8px;height:20.8px;color:#d0d3d5;"><use href="#star5"/></svg><svg class="i" style="left:649.7px;top:15.8px;width:21.8px;height:20.8px;color:#d0d3d5;"><use href="#star5"/></svg><svg class="i" style="left:676.2px;top:15.8px;width:21.8px;height:20.8px;color:#d0d3d5;"><use href="#star5"/></svg><span class="t c" style="left:766.6px;top:14.4px;font-size:20px;">0</span><span class="t c" style="left:931.7px;top:14.4px;font-size:20px;transform:scaleX(0.9139);">20 janvier 2021</span><span class="t c" style="left:1111.9px;top:14.4px;font-size:20px;transform:scaleX(0.9328);">2 jours</span><div class="pub" style="left:1290.4px;top:5.15px;width:163.8px;height:41px"><span class="t" style="left:10.0px;top:9.6px;font-size:20px;transform:scaleX(0.9173);color:#fff;">Publié</span><svg class="i" style="left:133.6px;top:12.0px;width:19.4px;height:17.2px;color:#fff;"><use href="#send"/></svg></div><svg class="i" style="left:1483.4px;top:16.7px;width:18.4px;height:18.4px;color:#66707d;"><use href="#plus"/></svg>
</div>
<div class="row odd" style="top:631.00px">
<svg class="i" style="left:26.6px;top:18.3px;width:18.0px;height:10.6px;color:#1fc8c8;stroke-width:2.5;"><use href="#chev-dn"/></svg><svg class="i" style="left:71.6px;top:13.4px;width:23.4px;height:23.0px;color:#4a86f8;"><use href="#b-msg"/></svg><svg class="i" style="left:102.2px;top:13.4px;width:23.4px;height:23.0px;color:#32d432;"><use href="#b-reply"/></svg><svg class="i" style="left:132.6px;top:13.4px;width:23.4px;height:23.0px;color:#e6e8ea;"><use href="#b-x"/></svg><span class="t c" style="left:188.3px;top:13.0px;font-size:20px;transform:scaleX(0.8583);">ACME</span><div class="clip" style="left:311.2px;width:83px"><span class="t c" style="left:0.0px;top:13.0px;font-size:20px;transform:scaleX(0.9169);">Eddy8</span></div><div class="clip" style="left:441.9px;width:75.4px"><span class="t c" style="left:1.4px;top:13.0px;font-size:20px;transform:scaleX(0.9225);">18 janvier</span></div><svg class="i" style="left:570.2px;top:13.4px;width:21.8px;height:20.8px;color:#ee7125;"><use href="#star5"/></svg><svg class="i" style="left:596.7px;top:13.4px;width:21.8px;height:20.8px;color:#d0d3d5;"><use href="#star5"/></svg><svg class="i" style="left:623.2px;top:13.4px;width:21.8px;height:20.8px;color:#d0d3d5;"><use href="#star5"/></svg><svg class="i" style="left:649.7px;top:13.4px;width:21.8px;height:20.8px;color:#d0d3d5;"><use href="#star5"/></svg><svg class="i" style="left:676.2px;top:13.4px;width:21.8px;height:20.8px;color:#d0d3d5;"><use href="#star5"/></svg><span class="t c" style="left:766.6px;top:13.0px;font-size:20px;">4</span><span class="t c" style="left:931.7px;top:13.0px;font-size:20px;transform:scaleX(0.9139);">21 janvier 2021</span><span class="t c" style="left:1111.9px;top:13.0px;font-size:20px;transform:scaleX(0.9328);">3 jours</span><div class="pub" style="left:1290.4px;top:5.25px;width:163.8px;height:41px"><span class="t" style="left:10.0px;top:9.6px;font-size:20px;transform:scaleX(0.9173);color:#fff;">Publié</span><svg class="i" style="left:133.6px;top:12.0px;width:19.4px;height:17.2px;color:#fff;"><use href="#send"/></svg></div><svg class="i" style="left:1483.4px;top:16.9px;width:18.4px;height:18.4px;color:#66707d;"><use href="#plus"/></svg>
</div>
<div id="tline" style="left:26px;top:708.2px;width:1531.4px"></div>
<span class="t" style="left:26.2px;top:732.8px;font-size:18px;transform:scaleX(0.8627);color:#85888d;">32 avis</span>
<svg class="i" style="left:1227.2px;top:734.9px;width:13.4px;height:13.0px;color:#546373;"><use href="#pg-first"/></svg>
<svg class="i" style="left:1284.4px;top:735.6px;width:7.6px;height:12.4px;color:#8a8f97;"><use href="#pg-prev"/></svg>
<div id="pgcur" style="left:1317.4px;top:730px;width:22.8px;height:22.4px"></div>
<span class="t" style="left:1324.4px;top:733.4px;font-size:17.4px;color:#fff;">1</span>
<span class="t" style="left:1366.2px;top:733.4px;font-size:17.4px;color:#85888d;">2</span>
<span class="t" style="left:1408.2px;top:733.4px;font-size:17.4px;color:#85888d;">3</span>
<span class="t" style="left:1450.4px;top:733.4px;font-size:17.4px;color:#85888d;">4</span>
<svg class="i" style="left:1492.6px;top:735.6px;width:7.6px;height:12.4px;color:#8a8f97;"><use href="#pg-next"/></svg>
<svg class="i" style="left:1543.6px;top:734.9px;width:13.4px;height:13.0px;color:#546373;"><use href="#pg-last"/></svg>
</div>
</div></div></div>
</body>
</html>
